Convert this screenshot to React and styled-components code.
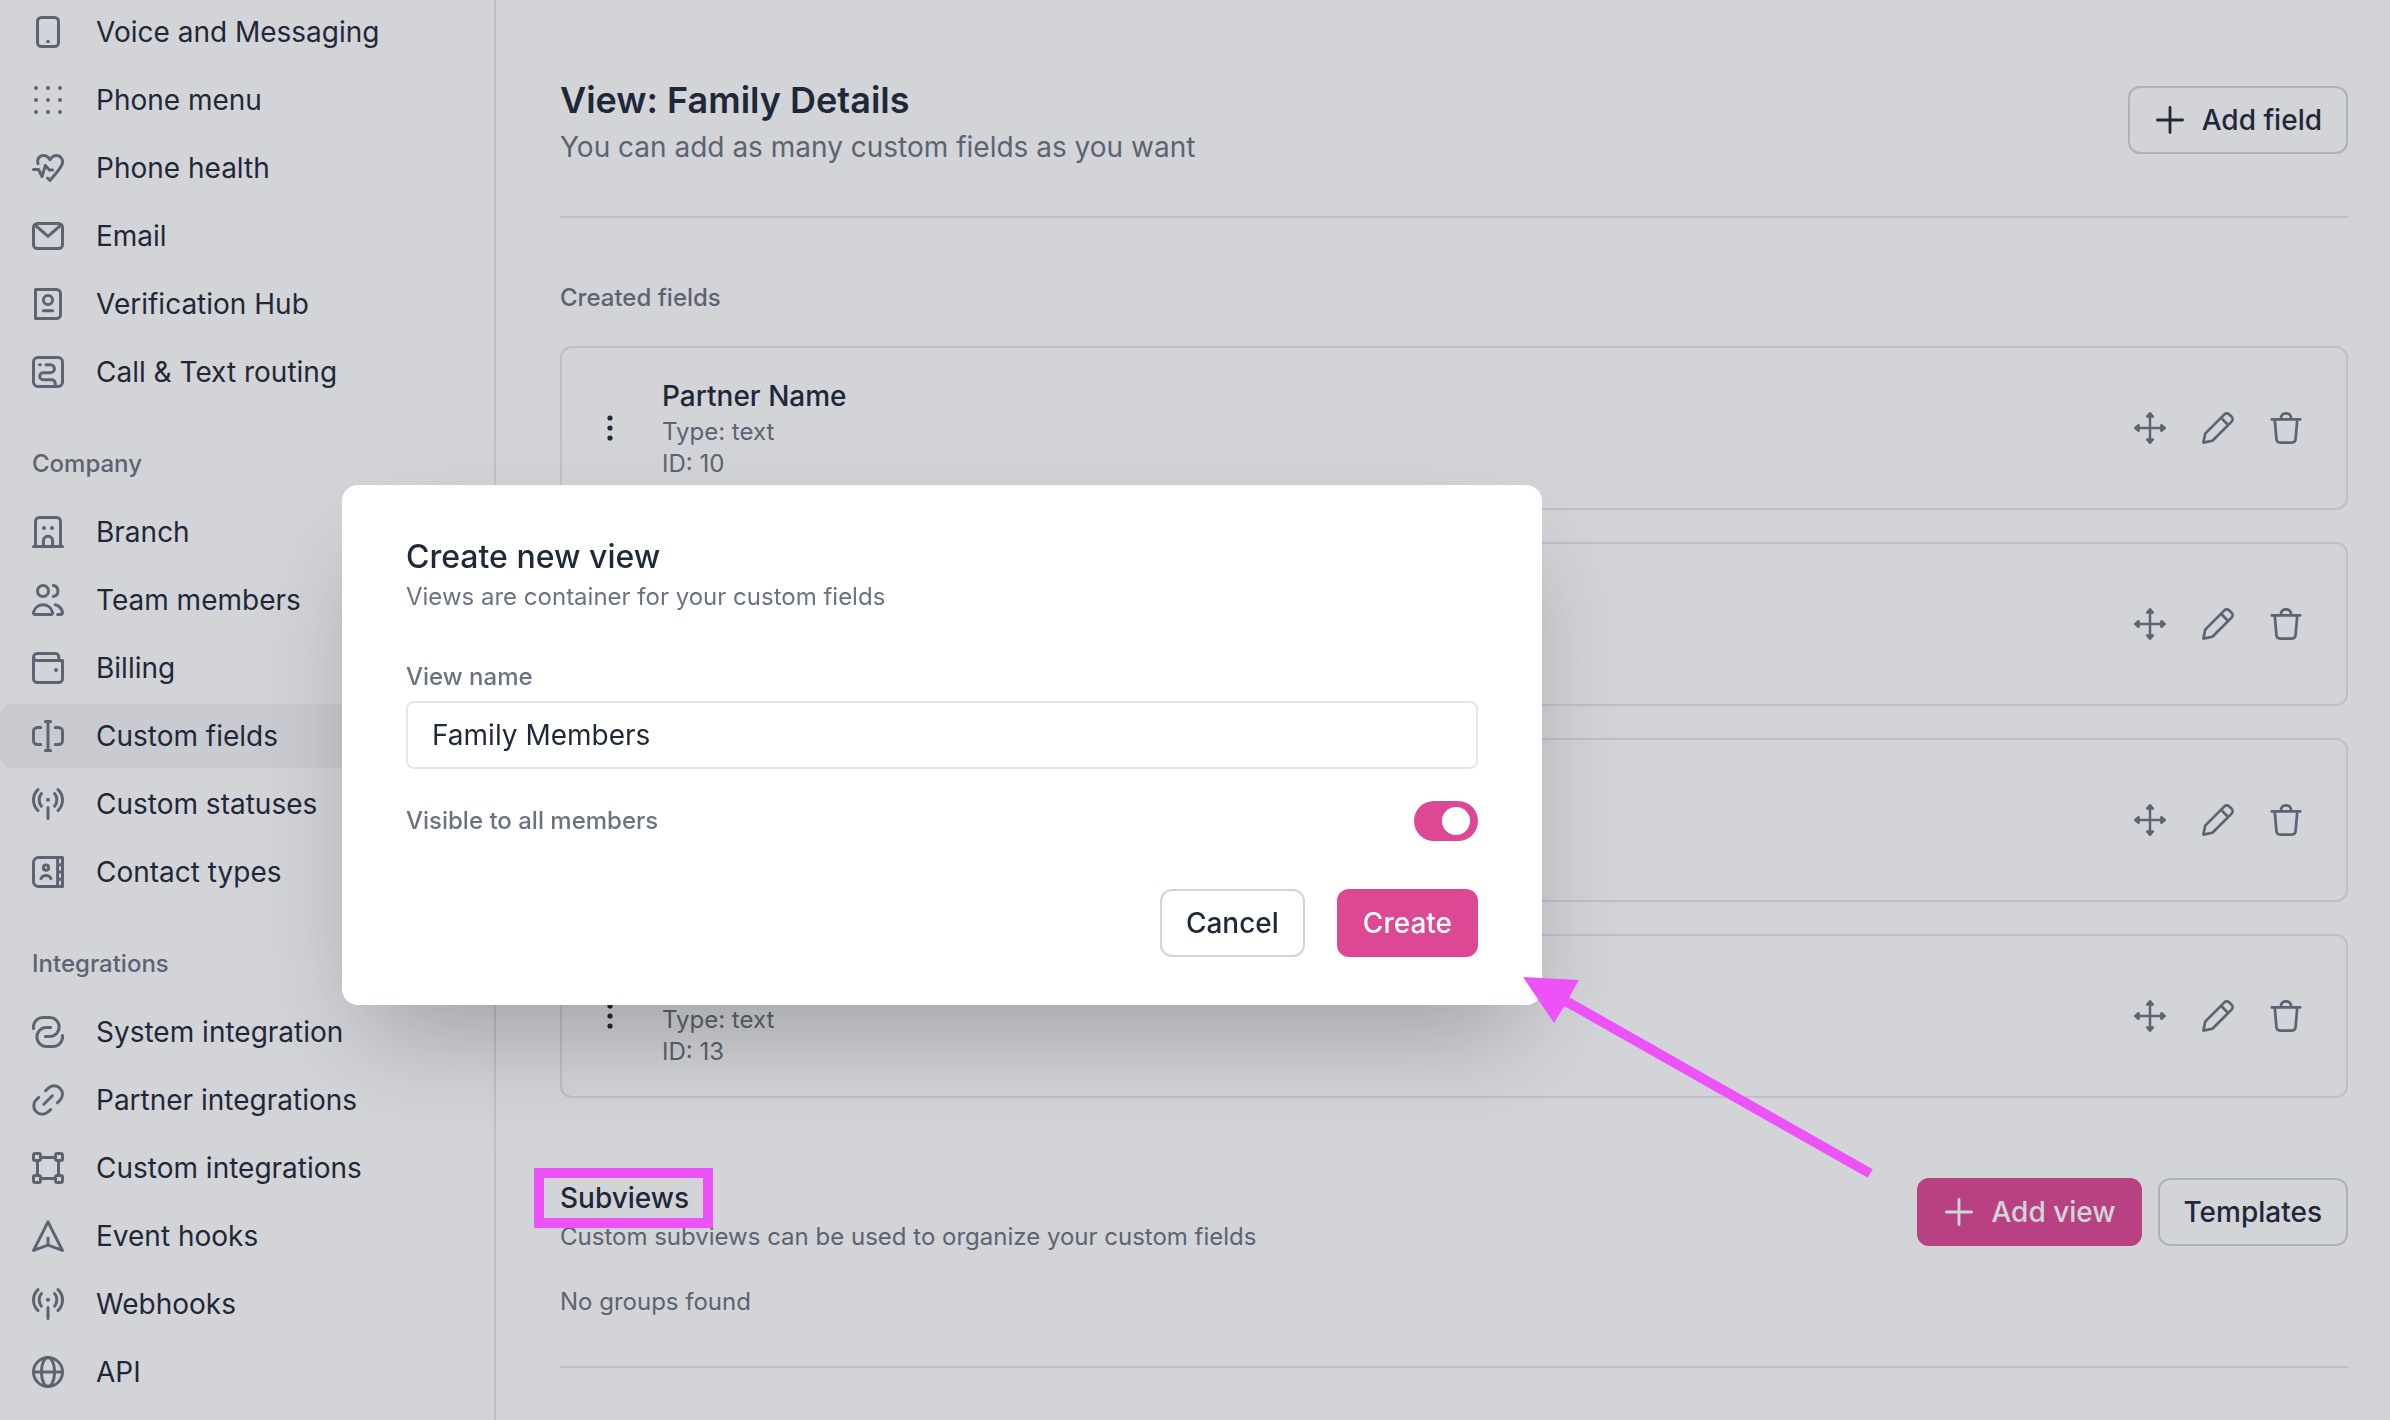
import React from "react";
import styled, { createGlobalStyle, css } from "styled-components";

const colors = {
  text: "#1f2937",
  muted: "#6b7280",
  border: "#e5e5ec",
  controlBorder: "#d1d5db",
  active: "#f3f4f6",
  brand: "#dd4894",
  marker: "#ec52f8",
};

const GlobalStyle = createGlobalStyle`
  *, *::before, *::after { box-sizing: border-box; }
  body {
    margin: 0;
    background: #fff;
    color: ${colors.text};
    font-family: Inter, "Liberation Sans", sans-serif;
    font-size: 28px;
    line-height: 40px;
  }
  button, input { font: inherit; color: inherit; }
  h1, h2, h3, p, ul { margin: 0; padding: 0; }
  ul { list-style: none; }
`;

/* ---------- icons ---------- */

const Svg = styled.svg`
  width: 32px;
  height: 32px;
  flex: none;
  display: block;
  fill: none;
  stroke: currentColor;
  stroke-width: ${(p) => p.$weight || 3};
  stroke-linecap: round;
  stroke-linejoin: round;
  .dot { fill: currentColor; stroke: none; }
`;

const Dot = ({ x, y, r = 2 }) => <circle className="dot" cx={x} cy={y} r={r} />;

const antenna = (
  <>
    <Dot x={16} y={11.7} />
    <path d="M16 19.5v10.9M9.4 5.6c-3 3.4-3 9 0 12.6M22.6 5.6c3 3.4 3 9 0 12.6M6 1.6c-6 5.6-6 15.4 0 21M26 1.6c6 5.6 6 15.4 0 21" />
  </>
);

const shapes = {
  phone: (
    <>
      <rect x="5.5" y="1.5" width="21" height="29" rx="4" />
      <ellipse className="dot" cx="16" cy="25.6" rx="2" ry="1.6" />
    </>
  ),
  keypad: [4, 16, 28].map((y) => [4, 16, 28].map((x) => <Dot key={`${x}-${y}`} x={x} y={y} />)),
  health: (
    <>
      <path d="M6 11.6C4.6 7 7.4 3.5 11.4 3.5c3 0 5 1.6 6.6 4.2 1.6-2.6 3.6-4.2 6.4-4.2 4.4 0 7.2 4.4 5.8 8.6C28.4 17 22.6 23.2 18 28.4l-2.4-2.2" />
      <path d="M1.5 17.4h5.1L10 24.6 13.4 13.4l4 4.6h3.2" />
    </>
  ),
  mail: (
    <>
      <rect x="1.5" y="3.5" width="29" height="25" rx="4" />
      <path d="M3 5l13 11.4L29 5" />
    </>
  ),
  badge: (
    <>
      <path d="M3.5 1.5h21a4 4 0 0 1 4 4v21a4 4 0 0 1-4 4h-21z" />
      <circle cx="16" cy="12" r="4.6" />
      <path d="M11.4 22.7h9.2" />
    </>
  ),
  routing: (
    <>
      <rect x="1.5" y="1.5" width="29" height="29" rx="4.5" />
      <ellipse className="dot" cx="8" cy="8.7" rx="2" ry="1.5" />
      <path d="M14 8.7h4.4a4 4 0 0 1 0 8h-7.2a3.5 3.5 0 0 0 0 7h8.4a3.6 3.6 0 0 1 3.6 3.6v3" />
    </>
  ),
  building: (
    <>
      <path d="M1.5 30.5h29M3.5 30.5v-25a4 4 0 0 1 4-4h17a4 4 0 0 1 4 4v25M11.4 30v-5.2a4.6 4.6 0 0 1 9.2 0V30" />
      <Dot x={12} y={12} />
      <Dot x={20} y={12} />
    </>
  ),
  team: (
    <>
      <circle cx="11" cy="7" r="5.5" />
      <path d="M3.2 30.5h15.6a1.7 1.7 0 0 0 1.7-2.2C19.3 24 15.6 20.8 11 20.8S2.7 24 1.5 28.3a1.7 1.7 0 0 0 1.7 2.2z" />
      <path d="M21.4 1.5a5.6 5.6 0 0 1 0 11M23.4 20.8c4 1 6.2 4 7 7.4a1.9 1.9 0 0 1-1.8 2.3h-3" />
    </>
  ),
  wallet: (
    <>
      <path d="M1.5 5.2v21.3a4 4 0 0 0 4 4h21a4 4 0 0 0 4-4v-18H4.8a3.3 3.3 0 0 1-3.3-3.3 3.7 3.7 0 0 1 3.7-3.7h18.2a3.4 3.4 0 0 1 3.4 3.4v3.6" />
      <Dot x={24} y={18} />
    </>
  ),
  input: (
    <path d="M8.8 7.5H5.5a4 4 0 0 0-4 4v9a4 4 0 0 0 4 4h3.3M23.2 7.5h3.3a4 4 0 0 1 4 4v9a4 4 0 0 1-4 4h-3.3M16 1.5v29M13.4 1.5h5.2M13.4 30.5h5.2" />
  ),
  antenna,
  contact: (
    <>
      <path d="M6.5 1.5h24v29h-24a5 5 0 0 1-5-5v-19a5 5 0 0 1 5-5zM25.6 1.5v29M25.6 8.7h5M25.6 16h5M25.6 23.3h5" />
      <circle cx="14" cy="11.7" r="2.6" />
      <path d="M9 22.6c1.8-4 8.2-4 10 0" />
    </>
  ),
  loop: (
    <path d="M1.5 12.6V11A9.5 9.5 0 0 1 11 1.5h6.6a9.5 9.5 0 0 1 0 19H13.4M30.5 19.4V21a9.5 9.5 0 0 1-9.5 9.5h-6.6a9.5 9.5 0 0 1 0-19h4.2" />
  ),
  link: (
    <path d="M11.8 20.2l8.6-8.4M13.6 6.8l2.6-2.6a8.4 8.4 0 0 1 11.8 0 8.6 8.6 0 0 1 0 12l-2.6 2.6M18.6 25.6l-2.4 2.2a8.6 8.6 0 0 1-12 0 8.6 8.6 0 0 1 0-12l2.6-2.4" />
  ),
  frame: (
    <>
      {[1.5, 23.5].map((y) =>
        [1.5, 23.5].map((x) => <rect key={`${x}-${y}`} x={x} y={y} width="7" height="7" rx="1.8" />)
      )}
      <path d="M8.6 5.5h14.8M8.6 26.5h14.8M5.5 8.6v14.8M26.5 8.6v14.8" />
    </>
  ),
  navigate: <path d="M16 1.8L30.4 30.4 16 25.2 1.6 30.4zM16 18v7" />,
  globe: (
    <>
      <circle cx="16" cy="16" r="14.5" />
      <ellipse cx="16" cy="16" rx="6.6" ry="14.5" />
      <path d="M1.5 16h29" />
    </>
  ),
  plus: <path d="M16 3.4v25.2M3.4 16h25.2" />,
  more: [6, 16, 26].map((y) => <Dot key={y} x={16} y={y} r={2.6} />),
  move: (
    <>
      <path d="M16 3v26M3 16h26" />
      <path
        fill="currentColor"
        d="M16 1.3l2.8 3.3h-5.6zM16 30.7l2.8-3.3h-5.6zM1.3 16l3.3-2.8v5.6zM30.7 16l-3.3-2.8v5.6z"
      />
    </>
  ),
  edit: <path d="M1.4 30.6l1.8-9L22.4 2.4a3.4 3.4 0 0 1 4.8 0l2.4 2.4a3.4 3.4 0 0 1 0 4.8L10.4 28.8zM19 5.8l7.2 7.2" />,
  trash: <path d="M1.8 7.4h28.4M10.8 7c0-3.6 2.2-5.7 5.2-5.7s5.2 2.1 5.2 5.7M4.8 7.8l1.6 19.4a3.8 3.8 0 0 0 3.8 3.4h11.6a3.8 3.8 0 0 0 3.8-3.4l1.6-19.4" />,
};

const Icon = ({ name, weight }) => (
  <Svg viewBox="0 0 32 32" $weight={weight} aria-hidden="true">
    {shapes[name]}
  </Svg>
);

/* ---------- shell ---------- */

const Shell = styled.div`
  display: flex;
  min-height: 100vh;
  position: relative;
`;

const Sidebar = styled.nav`
  flex: none;
  width: 496px;
  border-right: 2px solid ${colors.border};
`;

const NavGroup = styled.section`
  & + & { padding-top: 40px; }
`;

const NavHeading = styled.h2`
  padding: 0 32px;
  margin-bottom: 16px;
  font-size: 24px;
  line-height: 40px;
  font-weight: 500;
  color: ${colors.muted};
`;

const NavList = styled.ul`
  display: flex;
  flex-direction: column;
  gap: 4px;
`;

const NavLink = styled.a`
  display: flex;
  align-items: center;
  gap: 32px;
  height: 64px;
  padding: 0 32px;
  border-radius: 12px;
  color: ${colors.text};
  text-decoration: none;
  background: ${(p) => (p.$active ? colors.active : "transparent")};
  svg { color: ${colors.muted}; }
`;

const Main = styled.main`
  flex: 1;
  min-width: 0;
  padding: 75px 42px 0 64px;
`;

const PageHeader = styled.header`
  display: flex;
  align-items: center;
  justify-content: space-between;
  padding-bottom: 51px;
  border-bottom: 2px solid ${colors.border};
`;

const PageTitle = styled.h1`
  font-size: 36px;
  line-height: 50px;
  font-weight: 600;
`;

const PageLead = styled.p`
  margin-top: 4px;
  line-height: 36px;
  color: ${colors.muted};
`;

const Button = styled.button`
  display: inline-flex;
  align-items: center;
  justify-content: center;
  gap: 16px;
  height: 68px;
  padding: 0 24px;
  border: 2px solid ${colors.controlBorder};
  border-radius: 12px;
  background: #fff;
  font-weight: 500;
  white-space: nowrap;
  cursor: pointer;
  ${(p) =>
    p.$primary &&
    css`
      border-color: ${colors.brand};
      background: ${colors.brand};
      color: #fff;
    `}
`;

const FieldsHeading = styled.h2`
  margin: 64px 0 32px;
  font-size: 24px;
  line-height: 32px;
  font-weight: 500;
  color: ${colors.muted};
`;

const FieldList = styled.ul`
  display: flex;
  flex-direction: column;
  gap: 32px;
`;

const FieldCard = styled.li`
  display: flex;
  align-items: center;
  gap: 36px;
  padding: 28px 44px 28px 32px;
  border: 2px solid ${colors.border};
  border-radius: 12px;
`;

const FieldInfo = styled.div`
  flex: 1;
`;

const FieldName = styled.h3`
  font-size: 28px;
  line-height: 40px;
  font-weight: 500;
`;

const Detail = styled.p`
  font-size: 24px;
  line-height: ${(p) => p.$line || 32}px;
  color: ${colors.muted};
`;

const IconButton = styled.button`
  display: flex;
  padding: 0;
  border: 0;
  background: none;
  color: ${(p) => (p.$dark ? colors.text : colors.muted)};
  cursor: pointer;
`;

const Subviews = styled.section`
  display: flex;
  flex-direction: column;
  gap: 30px;
  margin-top: 80px;
  padding-bottom: 48px;
  border-bottom: 2px solid ${colors.border};
`;

const SubviewsHeader = styled.div`
  display: flex;
  align-items: flex-start;
  justify-content: space-between;
`;

const Actions = styled.div`
  display: flex;
  gap: ${(p) => p.$gap}px;
  justify-content: flex-end;
`;

const Marked = styled.h2`
  position: relative;
  width: fit-content;
  font-size: 28px;
  line-height: 40px;
  font-weight: 500;
  &::after {
    content: "";
    position: absolute;
    inset: -10px -24px -10px -26px;
    border: 10px solid ${colors.marker};
    z-index: 30;
  }
`;

/* ---------- dialog ---------- */

const Backdrop = styled.div`
  position: fixed;
  inset: 0;
  z-index: 10;
  background: rgba(35, 41, 59, 0.2);
`;

const Dialog = styled.form`
  position: absolute;
  z-index: 20;
  top: 485px;
  left: 342px;
  width: 1200px;
  padding: 48px 64px;
  border-radius: 16px;
  background: #fff;
  box-shadow: 0 50px 100px -24px rgba(0, 0, 0, 0.25);
`;

const DialogTitle = styled.h2`
  font-size: 32px;
  line-height: 48px;
  font-weight: 500;
`;

const Field = styled.div`
  display: flex;
  flex-direction: column;
  gap: 8px;
  margin: 48px 0 32px;
`;

const Label = styled.label`
  font-size: 24px;
  line-height: 32px;
  font-weight: 500;
  color: ${colors.muted};
`;

const TextInput = styled.input`
  width: 100%;
  height: 68px;
  padding: 0 24px;
  border: 2px solid ${colors.border};
  border-radius: 8px;
  background: #fff;
  outline: none;
`;

const ToggleRow = styled.div`
  display: flex;
  align-items: center;
  justify-content: space-between;
  margin-bottom: 48px;
`;

const Toggle = styled.input`
  appearance: none;
  display: flex;
  align-items: center;
  width: 64px;
  height: 40px;
  margin: 0;
  padding: 0 8px;
  border-radius: 20px;
  background: ${colors.controlBorder};
  cursor: pointer;
  &::before {
    content: "";
    width: 28px;
    height: 28px;
    border-radius: 50%;
    background: #fff;
  }
  &:checked {
    justify-content: flex-end;
    background: ${colors.brand};
  }
`;

const Arrow = styled.svg`
  position: absolute;
  z-index: 30;
  top: 977px;
  left: 1523px;
  width: 350px;
  height: 201px;
  fill: ${colors.marker};
  pointer-events: none;
`;

/* ---------- data ---------- */

const groups = [
  {
    items: [
      ["phone", "Voice and Messaging"],
      ["keypad", "Phone menu"],
      ["health", "Phone health"],
      ["mail", "Email"],
      ["badge", "Verification Hub"],
      ["routing", "Call & Text routing"],
    ],
  },
  {
    title: "Company",
    items: [
      ["building", "Branch"],
      ["team", "Team members"],
      ["wallet", "Billing"],
      ["input", "Custom fields"],
      ["antenna", "Custom statuses"],
      ["contact", "Contact types"],
    ],
  },
  {
    title: "Integrations",
    items: [
      ["loop", "System integration"],
      ["link", "Partner integrations"],
      ["frame", "Custom integrations"],
      ["navigate", "Event hooks"],
      ["antenna", "Webhooks"],
      ["globe", "API"],
    ],
  },
];

const fields = [
  { id: 10, name: "Partner Name" },
  { id: 11 },
  { id: 12 },
  { id: 13 },
];

export default function App() {
  return (
    <>
      <GlobalStyle />
      <Shell>
        <Sidebar>
          {groups.map((group, i) => (
            <NavGroup key={i}>
              {group.title && <NavHeading>{group.title}</NavHeading>}
              <NavList>
                {group.items.map(([icon, label]) => (
                  <li key={label}>
                    <NavLink href="#" $active={label === "Custom fields"}>
                      <Icon name={icon} />
                      {label}
                    </NavLink>
                  </li>
                ))}
              </NavList>
            </NavGroup>
          ))}
        </Sidebar>

        <Main>
          <PageHeader>
            <div>
              <PageTitle>View: Family Details</PageTitle>
              <PageLead>You can add as many custom fields as you want</PageLead>
            </div>
            <Button type="button">
              <Icon name="plus" weight={2.8} />
              Add field
            </Button>
          </PageHeader>

          <FieldsHeading>Created fields</FieldsHeading>
          <FieldList>
            {fields.map((field) => (
              <FieldCard key={field.id}>
                <IconButton type="button" $dark aria-label="More">
                  <Icon name="more" />
                </IconButton>
                <FieldInfo>
                  <FieldName>{field.name || "\u00a0"}</FieldName>
                  <Detail>Type: text</Detail>
                  <Detail>ID: {field.id}</Detail>
                </FieldInfo>
                <IconButton type="button" aria-label="Move">
                  <Icon name="move" weight={2.5} />
                </IconButton>
                <IconButton type="button" aria-label="Edit">
                  <Icon name="edit" weight={2.7} />
                </IconButton>
                <IconButton type="button" aria-label="Delete">
                  <Icon name="trash" weight={2.7} />
                </IconButton>
              </FieldCard>
            ))}
          </FieldList>

          <Subviews>
            <SubviewsHeader>
              <div>
                <Marked>Subviews</Marked>
                <Detail $line={38}>Custom subviews can be used to organize your custom fields</Detail>
              </div>
              <Actions $gap={16}>
                <Button type="button" $primary>
                  <Icon name="plus" weight={2.8} />
                  Add view
                </Button>
                <Button type="button">Templates</Button>
              </Actions>
            </SubviewsHeader>
            <Detail>No groups found</Detail>
          </Subviews>
        </Main>

        <Backdrop />
        <Dialog role="dialog" aria-labelledby="dialog-title" onSubmit={(e) => e.preventDefault()}>
          <DialogTitle id="dialog-title">Create new view</DialogTitle>
          <Detail>Views are container for your custom fields</Detail>
          <Field>
            <Label htmlFor="view-name">View name</Label>
            <TextInput id="view-name" type="text" defaultValue="Family Members" />
          </Field>
          <ToggleRow>
            <Label htmlFor="visible">Visible to all members</Label>
            <Toggle id="visible" type="checkbox" role="switch" defaultChecked />
          </ToggleRow>
          <Actions $gap={32}>
            <Button type="button">Cancel</Button>
            <Button type="submit" $primary>
              Create
            </Button>
          </Actions>
        </Dialog>

        <Arrow viewBox="0 0 350 201" aria-hidden="true">
          <path d="M0 0L56 3 46.3 20.3 349.7 192.3 344.7 200.7 41.3 29 31 46z" />
        </Arrow>
      </Shell>
    </>
  );
}
